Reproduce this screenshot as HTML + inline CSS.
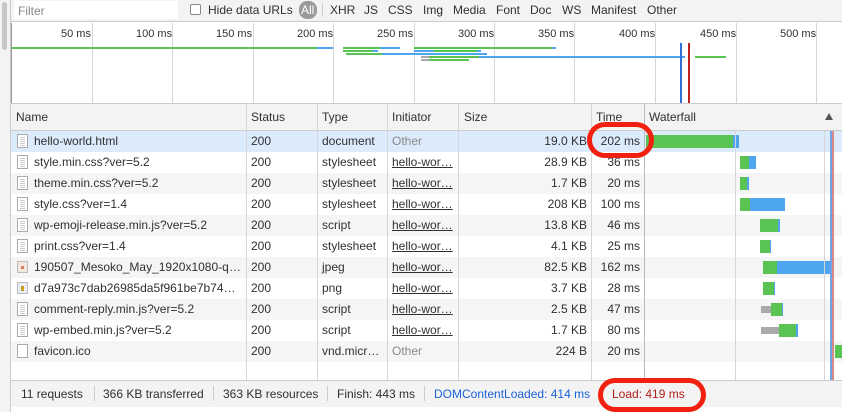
<!DOCTYPE html>
<html><head><meta charset="utf-8"><style>
*{box-sizing:border-box;margin:0;padding:0}
body{width:842px;height:412px;overflow:hidden;background:#fff;font-family:"Liberation Sans",Arial,sans-serif;font-size:12px;color:#303030;position:relative}
.a{position:absolute}
.t{position:absolute;white-space:nowrap;line-height:14px}
.row{position:absolute;left:11px;width:831px;height:21px}
.c{position:absolute;top:3px;white-space:nowrap;line-height:15px}
.r{text-align:right}
.vl{position:absolute;width:1px;background:#d6d6d6}
.ic{position:absolute;left:6px;top:3px;width:11px;height:14px;border:1px solid #aaa;background:#fff}
.ic i{position:absolute;left:2px;right:2px;height:1px;background:#ccc}
.g{position:absolute;top:4px;height:13px;background:#5ac452}
.b{position:absolute;top:4px;height:13px;background:#4fa6f0}
.w{position:absolute;top:7px;height:7px;background:#aaa}
u{text-decoration:underline;color:#303030}
.o{color:#888}
</style></head><body>
<div class="a" style="left:0;top:0;width:11px;height:412px;background:#f3f3f3;border-right:1px solid #ccc"></div>
<div class="a" style="left:2px;top:2px;width:5px;height:48px;background:#c8c8c8;border-radius:3px"></div>
<div class="a" style="left:11px;top:0;width:831px;height:22px;background:#f3f3f3;border-bottom:1px solid #ccc"></div>
<div class="a" style="left:14px;top:1px;width:164px;height:18px;background:#fff"></div>
<div class="t" style="left:18px;top:4px;color:#888">Filter</div>
<div class="a" style="left:190px;top:4px;width:11px;height:11px;border:1px solid #888;border-radius:2px;background:#fff"></div>
<div class="t" style="left:208px;top:3px">Hide data URLs</div>
<div class="a" style="left:299px;top:1px;width:18px;height:18px;background:#9a9a9a;border-radius:8px"></div>
<div class="t" style="left:301px;top:3px;color:#fff">All</div>
<div class="a" style="left:322px;top:3px;width:1px;height:14px;background:#ccc"></div>
<div class="t" style="left:330px;top:3px">XHR</div>
<div class="t" style="left:364px;top:3px">JS</div>
<div class="t" style="left:388px;top:3px">CSS</div>
<div class="t" style="left:423px;top:3px">Img</div>
<div class="t" style="left:453px;top:3px">Media</div>
<div class="t" style="left:496px;top:3px">Font</div>
<div class="t" style="left:530px;top:3px">Doc</div>
<div class="t" style="left:562px;top:3px">WS</div>
<div class="t" style="left:591px;top:3px">Manifest</div>
<div class="t" style="left:647px;top:3px">Other</div>

<div class="vl" style="left:11px;top:23px;height:80px;background:#999"></div>
<div class="vl" style="left:92px;top:23px;height:80px"></div>
<div class="vl" style="left:172px;top:23px;height:80px"></div>
<div class="vl" style="left:253px;top:23px;height:80px"></div>
<div class="vl" style="left:333px;top:23px;height:80px"></div>
<div class="vl" style="left:414px;top:23px;height:80px"></div>
<div class="vl" style="left:494px;top:23px;height:80px"></div>
<div class="vl" style="left:574px;top:23px;height:80px"></div>
<div class="vl" style="left:655px;top:23px;height:80px"></div>
<div class="vl" style="left:736px;top:23px;height:80px"></div>
<div class="vl" style="left:816px;top:23px;height:80px"></div>
<div class="t" style="left:61px;top:27px;font-size:11px">50 ms</div>
<div class="t" style="left:136px;top:27px;font-size:11px">100 ms</div>
<div class="t" style="left:216px;top:27px;font-size:11px">150 ms</div>
<div class="t" style="left:297px;top:27px;font-size:11px">200 ms</div>
<div class="t" style="left:377px;top:27px;font-size:11px">250 ms</div>
<div class="t" style="left:458px;top:27px;font-size:11px">300 ms</div>
<div class="t" style="left:538px;top:27px;font-size:11px">350 ms</div>
<div class="t" style="left:619px;top:27px;font-size:11px">400 ms</div>
<div class="t" style="left:700px;top:27px;font-size:11px">450 ms</div>
<div class="t" style="left:780px;top:27px;font-size:11px">500 ms</div>
<div class="a" style="left:12px;top:47px;width:305px;height:2px;background:#5ac452"></div>
<div class="a" style="left:317px;top:47px;width:16px;height:2px;background:#4fa6f0"></div>
<div class="a" style="left:343px;top:47px;width:37px;height:2px;background:#5ac452"></div>
<div class="a" style="left:380px;top:47px;width:20px;height:2px;background:#4fa6f0"></div>
<div class="a" style="left:414px;top:47px;width:138px;height:2px;background:#5ac452"></div>
<div class="a" style="left:552px;top:47px;width:4px;height:2px;background:#4fa6f0"></div>
<div class="a" style="left:343px;top:50px;width:30px;height:2px;background:#5ac452"></div>
<div class="a" style="left:373px;top:50px;width:5px;height:2px;background:#4fa6f0"></div>
<div class="a" style="left:414px;top:50px;width:20px;height:2px;background:#4fa6f0"></div>
<div class="a" style="left:434px;top:50px;width:43px;height:2px;background:#5ac452"></div>
<div class="a" style="left:477px;top:50px;width:4px;height:2px;background:#4fa6f0"></div>
<div class="a" style="left:346px;top:53px;width:36px;height:2px;background:#5ac452"></div>
<div class="a" style="left:382px;top:53px;width:105px;height:2px;background:#4fa6f0"></div>
<div class="a" style="left:421px;top:56px;width:8px;height:2px;background:#aaa"></div>
<div class="a" style="left:429px;top:56px;width:50px;height:2px;background:#5ac452"></div>
<div class="a" style="left:479px;top:56px;width:206px;height:2px;background:#4fa6f0"></div>
<div class="a" style="left:421px;top:59px;width:8px;height:2px;background:#aaa"></div>
<div class="a" style="left:429px;top:59px;width:40px;height:2px;background:#5ac452"></div>
<div class="a" style="left:695px;top:56px;width:31px;height:2px;background:#5ac452"></div>
<div class="a" style="left:680px;top:43px;width:2px;height:60px;background:#2f6fdc"></div>
<div class="a" style="left:688px;top:43px;width:2px;height:60px;background:#c0201c"></div>

<div class="a" style="left:11px;top:103px;width:831px;height:28px;background:#f3f3f3;border-top:1px solid #ccc;border-bottom:1px solid #ccc"></div>
<div class="t" style="left:16px;top:110px">Name</div>
<div class="t" style="left:251px;top:110px">Status</div>
<div class="t" style="left:322px;top:110px">Type</div>
<div class="t" style="left:392px;top:110px">Initiator</div>
<div class="t" style="left:464px;top:110px">Size</div>
<div class="t" style="left:596px;top:110px">Time</div>
<div class="t" style="left:649px;top:110px">Waterfall</div>
<div class="a" style="left:825px;top:113px;width:0;height:0;border-left:4px solid transparent;border-right:4px solid transparent;border-bottom:7px solid #555"></div>

<div class="row" style="top:131px;background:#dcebfb">
 <div class="ic"><i style="top:2px"></i><i style="top:4px"></i><i style="top:6px"></i><i style="top:8px"></i><i style="top:10px"></i></div>
 <div class="c" style="left:23px">hello-world.html</div><div class="c" style="left:240px">200</div><div class="c" style="left:311px">document</div><div class="c o" style="left:381px">Other</div><div class="c r" style="left:450px;width:126px">19.0 KB</div><div class="c r" style="left:580px;width:49px">202 ms</div>
 <div class="g" style="left:635px;width:87px"></div><div class="b" style="left:722px;width:6px"></div>
</div>
<div class="row" style="top:152px">
 <div class="ic"><i style="top:2px"></i><i style="top:4px"></i><i style="top:6px"></i><i style="top:8px"></i><i style="top:10px"></i></div>
 <div class="c" style="left:23px">style.min.css?ver=5.2</div><div class="c" style="left:240px">200</div><div class="c" style="left:311px">stylesheet</div><div class="c" style="left:381px"><u>hello-wor…</u></div><div class="c r" style="left:450px;width:126px">28.9 KB</div><div class="c r" style="left:580px;width:49px">36 ms</div>
 <div class="g" style="left:729px;width:9px"></div><div class="b" style="left:738px;width:7px"></div>
</div>
<div class="row" style="top:173px;background:#f5f5f5">
 <div class="ic"><i style="top:2px"></i><i style="top:4px"></i><i style="top:6px"></i><i style="top:8px"></i><i style="top:10px"></i></div>
 <div class="c" style="left:23px">theme.min.css?ver=5.2</div><div class="c" style="left:240px">200</div><div class="c" style="left:311px">stylesheet</div><div class="c" style="left:381px"><u>hello-wor…</u></div><div class="c r" style="left:450px;width:126px">1.7 KB</div><div class="c r" style="left:580px;width:49px">20 ms</div>
 <div class="g" style="left:729px;width:7px"></div><div class="b" style="left:736px;width:2px"></div>
</div>
<div class="row" style="top:194px">
 <div class="ic"><i style="top:2px"></i><i style="top:4px"></i><i style="top:6px"></i><i style="top:8px"></i><i style="top:10px"></i></div>
 <div class="c" style="left:23px">style.css?ver=1.4</div><div class="c" style="left:240px">200</div><div class="c" style="left:311px">stylesheet</div><div class="c" style="left:381px"><u>hello-wor…</u></div><div class="c r" style="left:450px;width:126px">208 KB</div><div class="c r" style="left:580px;width:49px">100 ms</div>
 <div class="g" style="left:729px;width:10px"></div><div class="b" style="left:739px;width:35px"></div>
</div>
<div class="row" style="top:215px;background:#f5f5f5">
 <div class="ic"><i style="top:2px"></i><i style="top:4px"></i><i style="top:6px"></i><i style="top:8px"></i><i style="top:10px"></i></div>
 <div class="c" style="left:23px">wp-emoji-release.min.js?ver=5.2</div><div class="c" style="left:240px">200</div><div class="c" style="left:311px">script</div><div class="c" style="left:381px"><u>hello-wor…</u></div><div class="c r" style="left:450px;width:126px">13.8 KB</div><div class="c r" style="left:580px;width:49px">46 ms</div>
 <div class="g" style="left:749px;width:18px"></div><div class="b" style="left:767px;width:2px"></div>
</div>
<div class="row" style="top:236px">
 <div class="ic"><i style="top:2px"></i><i style="top:4px"></i><i style="top:6px"></i><i style="top:8px"></i><i style="top:10px"></i></div>
 <div class="c" style="left:23px">print.css?ver=1.4</div><div class="c" style="left:240px">200</div><div class="c" style="left:311px">stylesheet</div><div class="c" style="left:381px"><u>hello-wor…</u></div><div class="c r" style="left:450px;width:126px">4.1 KB</div><div class="c r" style="left:580px;width:49px">25 ms</div>
 <div class="g" style="left:749px;width:10px"></div><div class="b" style="left:759px;width:1px"></div>
</div>
<div class="row" style="top:257px;background:#f5f5f5">
 <div class="ic" style="top:4px;height:12px;border-color:#bbb;background:#f4e8dc"><i style="top:4px;left:3px;right:3px;height:3px;background:#d08060"></i></div>
 <div class="c" style="left:23px">190507_Mesoko_May_1920x1080-q…</div><div class="c" style="left:240px">200</div><div class="c" style="left:311px">jpeg</div><div class="c" style="left:381px"><u>hello-wor…</u></div><div class="c r" style="left:450px;width:126px">82.5 KB</div><div class="c r" style="left:580px;width:49px">162 ms</div>
 <div class="g" style="left:752px;width:14px"></div><div class="b" style="left:766px;width:56px"></div>
</div>
<div class="row" style="top:278px">
 <div class="ic" style="top:4px;height:12px;border-color:#bbb;background:#e8eef8"><i style="top:3px;left:3px;right:3px;height:5px;background:#c8a020"></i></div>
 <div class="c" style="left:23px">d7a973c7dab26985da5f961be7b74…</div><div class="c" style="left:240px">200</div><div class="c" style="left:311px">png</div><div class="c" style="left:381px"><u>hello-wor…</u></div><div class="c r" style="left:450px;width:126px">3.7 KB</div><div class="c r" style="left:580px;width:49px">28 ms</div>
 <div class="g" style="left:752px;width:11px"></div><div class="b" style="left:763px;width:1px"></div>
</div>
<div class="row" style="top:299px;background:#f5f5f5">
 <div class="ic"><i style="top:2px"></i><i style="top:4px"></i><i style="top:6px"></i><i style="top:8px"></i><i style="top:10px"></i></div>
 <div class="c" style="left:23px">comment-reply.min.js?ver=5.2</div><div class="c" style="left:240px">200</div><div class="c" style="left:311px">script</div><div class="c" style="left:381px"><u>hello-wor…</u></div><div class="c r" style="left:450px;width:126px">2.5 KB</div><div class="c r" style="left:580px;width:49px">47 ms</div>
 <div class="w" style="left:750px;width:10px"></div><div class="g" style="left:760px;width:11px"></div><div class="b" style="left:771px;width:1px"></div>
</div>
<div class="row" style="top:320px">
 <div class="ic"><i style="top:2px"></i><i style="top:4px"></i><i style="top:6px"></i><i style="top:8px"></i><i style="top:10px"></i></div>
 <div class="c" style="left:23px">wp-embed.min.js?ver=5.2</div><div class="c" style="left:240px">200</div><div class="c" style="left:311px">script</div><div class="c" style="left:381px"><u>hello-wor…</u></div><div class="c r" style="left:450px;width:126px">1.7 KB</div><div class="c r" style="left:580px;width:49px">80 ms</div>
 <div class="w" style="left:750px;width:18px"></div><div class="g" style="left:768px;width:17px"></div><div class="b" style="left:785px;width:2px"></div>
</div>
<div class="row" style="top:341px;background:#f5f5f5">
 <div class="ic"></div>
 <div class="c" style="left:23px">favicon.ico</div><div class="c" style="left:240px">200</div><div class="c" style="left:311px">vnd.micr…</div><div class="c o" style="left:381px">Other</div><div class="c r" style="left:450px;width:126px">224 B</div><div class="c r" style="left:580px;width:49px">20 ms</div>
 <div class="g" style="left:824px;width:7px"></div>
</div>

<div class="vl" style="left:246px;top:104px;height:276px"></div>
<div class="vl" style="left:317px;top:104px;height:276px"></div>
<div class="vl" style="left:387px;top:104px;height:276px"></div>
<div class="vl" style="left:458px;top:104px;height:276px"></div>
<div class="vl" style="left:591px;top:104px;height:276px"></div>
<div class="vl" style="left:644px;top:104px;height:276px;background:#bbb"></div>
<div class="vl" style="left:735px;top:131px;height:249px"></div>
<div class="vl" style="left:824px;top:131px;height:249px"></div>
<div class="a" style="left:830px;top:131px;width:2px;height:249px;background:#6fa4e8"></div>
<div class="a" style="left:832px;top:131px;width:2px;height:249px;background:#d98a88"></div>

<div class="a" style="left:11px;top:380px;width:831px;height:27px;background:#f3f3f3;border-top:1px solid #ccc"></div>
<div class="t" style="left:21px;top:387px">11 requests</div>
<div class="a" style="left:94px;top:386px;width:1px;height:15px;background:#ccc"></div>
<div class="t" style="left:103px;top:387px">366 KB transferred</div>
<div class="a" style="left:213px;top:386px;width:1px;height:15px;background:#ccc"></div>
<div class="t" style="left:223px;top:387px">363 KB resources</div>
<div class="a" style="left:327px;top:386px;width:1px;height:15px;background:#ccc"></div>
<div class="t" style="left:337px;top:387px">Finish: 443 ms</div>
<div class="a" style="left:424px;top:386px;width:1px;height:15px;background:#ccc"></div>
<div class="t" style="left:434px;top:387px;color:#1a62d6">DOMContentLoaded: 414 ms</div>
<div class="a" style="left:602px;top:386px;width:1px;height:15px;background:#ccc"></div>
<div class="t" style="left:612px;top:387px;color:#b0201c">Load: 419 ms</div>

<div class="a" style="left:587px;top:122px;width:67px;height:36px;border:5px solid #f2210f;border-radius:18px"></div>
<div class="a" style="left:598px;top:378px;width:108px;height:34px;border:5px solid #f2210f;border-radius:17px"></div>
</body></html>
